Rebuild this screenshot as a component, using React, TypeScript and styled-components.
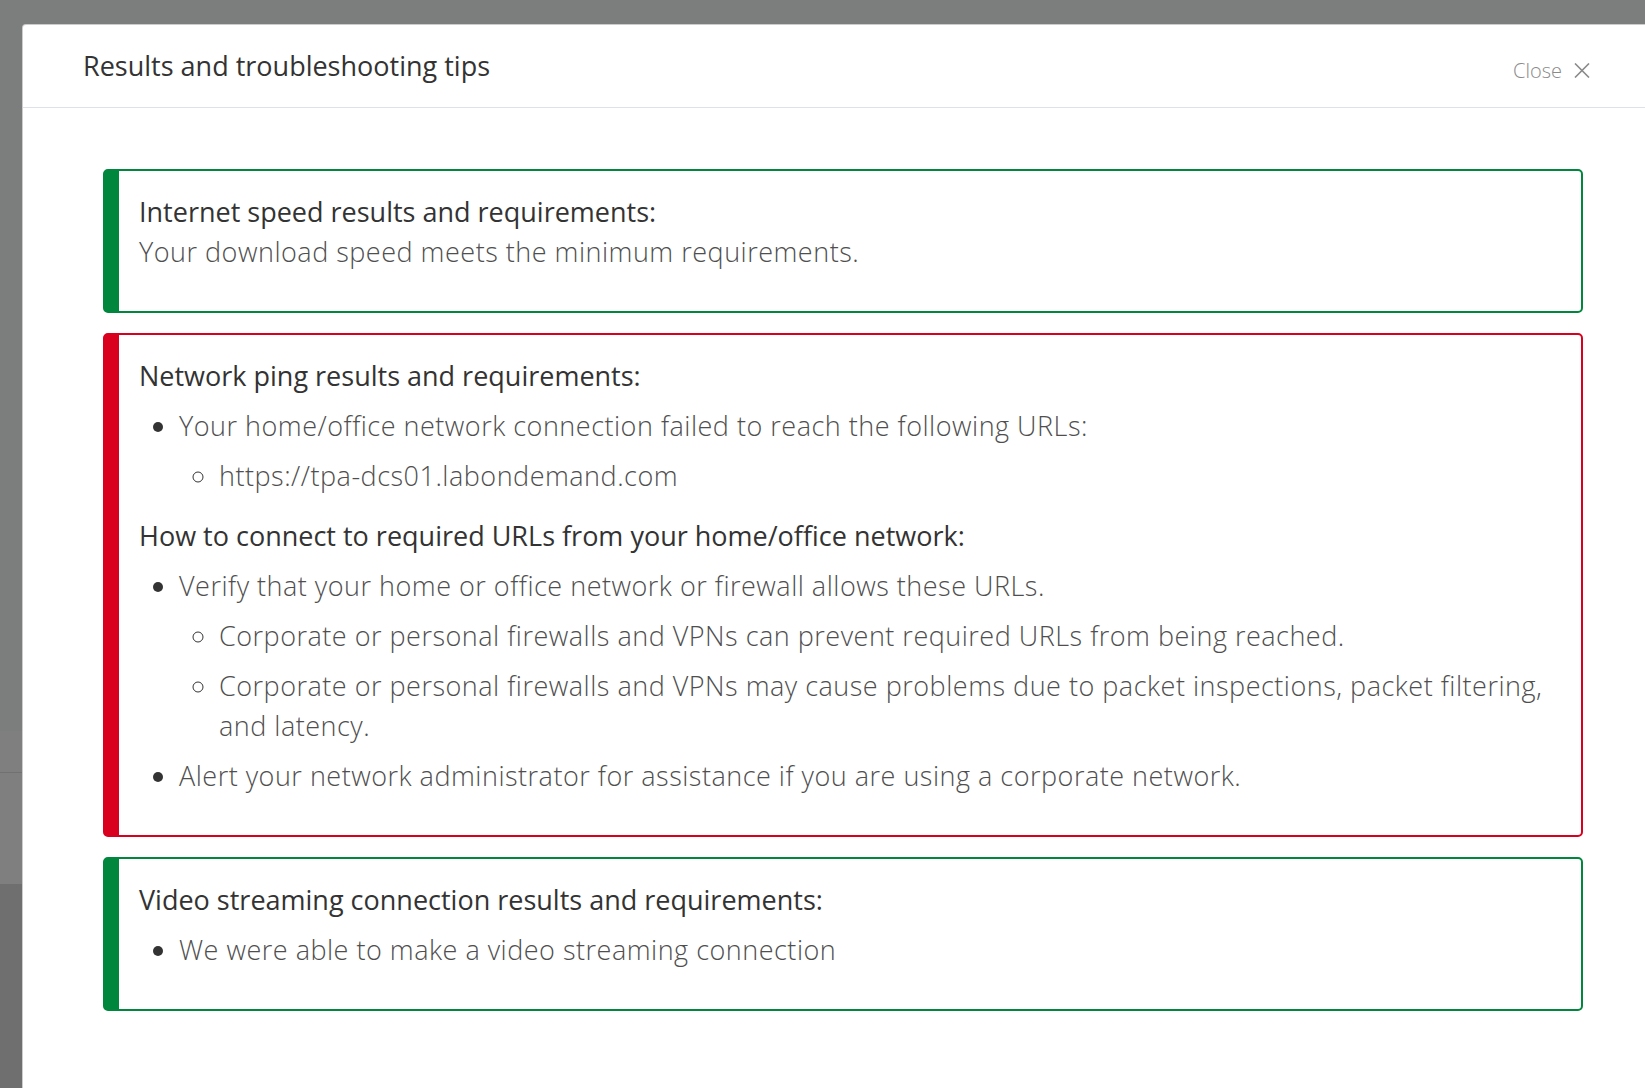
import React from "react";
import styled, { createGlobalStyle, css } from "styled-components";

const GlobalStyle = createGlobalStyle`
  html, body {
    margin: 0;
    padding: 0;
    height: 100%;
    overflow: hidden;
  }
  body {
    font-family: "Open Sans", "Noto Sans", "Liberation Sans", sans-serif;
    background: linear-gradient(
      to bottom,
      #7b7e7d 0,
      #7b7e7d 731px,
      #7e7f7e 731px,
      #7e7f7e 772px,
      #717171 772px,
      #717171 773px,
      #7f7f7f 773px,
      #7f7f7f 884px,
      #6f6f6f 884px
    );
  }
`;

const Backdrop = styled.div`
  height: 100vh;
  overflow: hidden;
  padding: 24px 0 0 22px;
  box-sizing: border-box;
`;

const Modal = styled.div`
  width: 1643px;
  min-height: 1100px;
  background: #fff;
  border: 1px solid rgba(0, 0, 0, 0.2);
  border-radius: 4px 0 0 0;
  box-sizing: border-box;
`;

const Header = styled.header`
  display: flex;
  align-items: center;
  justify-content: space-between;
  padding: 21px 74px 21px 60px;
  border-bottom: 1px solid #dee2e6;
`;

const Title = styled.h1`
  margin: 0;
  font-size: 27px;
  line-height: 40px;
  font-weight: 400;
  color: #333;
`;

const CloseButton = styled.button`
  display: flex;
  align-items: center;
  gap: 12px;
  margin-top: 9px;
  padding: 0;
  border: 0;
  background: none;
  font-family: inherit;
  font-size: 20px;
  font-weight: 300;
  line-height: 28px;
  color: #8a8a8a;
  cursor: pointer;
`;

const Body = styled.main`
  display: flex;
  flex-direction: column;
  gap: 20px;
  padding: 61px 81px 60px 80px;
`;

const tones = {
  ok: "#00873d",
  fail: "#d9001f",
};

const ResultBox = styled.section<{ $tone: "ok" | "fail" }>`
  ${({ $tone }) => css`
    border: 2px solid ${tones[$tone]};
    border-left-width: 16px;
  `}
  border-radius: 5px;
  padding: 21px 20px 39px 20px;
`;

const BoxHeading = styled.h2<{ $spaced?: boolean }>`
  margin: ${({ $spaced }) => ($spaced ? "20px 0 0" : "0")};
  font-size: 27px;
  line-height: 40px;
  font-weight: 400;
  color: #333;
`;

const BoxText = styled.p`
  margin: 0;
  font-size: 27px;
  line-height: 40px;
  font-weight: 300;
  letter-spacing: 0.5px;
  color: #4f4f4f;
`;

const List = styled.ul<{ $nested?: boolean }>`
  margin: 0;
  padding-left: 40px;
  list-style: ${({ $nested }) => ($nested ? "circle" : "disc")};
  font-size: 27px;
  line-height: 40px;
  font-weight: 300;
  letter-spacing: 0.5px;
  color: #4f4f4f;

  li::marker {
    color: #333;
  }
`;

const Item = styled.li`
  margin-top: 10px;
`;

const CloseIcon = () => (
  <svg width="16" height="15" viewBox="0 0 16 15" aria-hidden="true">
    <path d="M1 0.5 L15 14.5 M15 0.5 L1 14.5" stroke="#8a8a8a" strokeWidth="1.6" fill="none" />
  </svg>
);

export default function App() {
  return (
    <>
      <GlobalStyle />
      <Backdrop>
        <Modal>
          <Header>
            <Title>Results and troubleshooting tips</Title>
            <CloseButton type="button">
              Close
              <CloseIcon />
            </CloseButton>
          </Header>
          <Body>
            <ResultBox $tone="ok">
              <BoxHeading>Internet speed results and requirements:</BoxHeading>
              <BoxText>Your download speed meets the minimum requirements.</BoxText>
            </ResultBox>

            <ResultBox $tone="fail">
              <BoxHeading>Network ping results and requirements:</BoxHeading>
              <List>
                <Item>
                  Your home/office network connection failed to reach the following URLs:
                  <List $nested>
                    <Item>https://tpa-dcs01.labondemand.com</Item>
                  </List>
                </Item>
              </List>
              <BoxHeading $spaced>How to connect to required URLs from your home/office network:</BoxHeading>
              <List>
                <Item>
                  Verify that your home or office network or firewall allows these URLs.
                  <List $nested>
                    <Item>Corporate or personal firewalls and VPNs can prevent required URLs from being reached.</Item>
                    <Item>
                      Corporate or personal firewalls and VPNs may cause problems due to packet inspections, packet
                      filtering, and latency.
                    </Item>
                  </List>
                </Item>
                <Item>Alert your network administrator for assistance if you are using a corporate network.</Item>
              </List>
            </ResultBox>

            <ResultBox $tone="ok">
              <BoxHeading>Video streaming connection results and requirements:</BoxHeading>
              <List>
                <Item>We were able to make a video streaming connection</Item>
              </List>
            </ResultBox>
          </Body>
        </Modal>
      </Backdrop>
    </>
  );
}
